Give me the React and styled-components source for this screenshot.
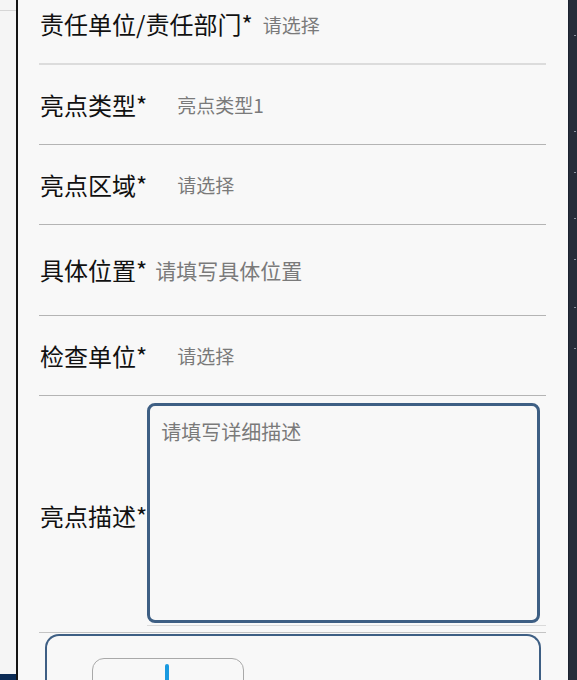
import React from 'react'
import styled, { createGlobalStyle } from 'styled-components'

const Global = createGlobalStyle`
  html, body { margin: 0; padding: 0; background: #f7f7f7; }
  body { font-family: "Noto Sans CJK SC", "Noto Sans", sans-serif; }
`;

const Screen = styled.div`
  display: flex;
  width: 577px;
  height: 680px;
  overflow: hidden;
`;

const SideStrip = styled.div`
  width: 16px;
  flex-shrink: 0;
  background: #f5f5f5;
  border-right: 2px solid #141414;
  display: flex;
  flex-direction: column;
  justify-content: space-between;
`;

const StripLine = styled.div`
  margin-top: 10px;
  height: 1px;
  background: #d6d6d6;
`;

const StripFoot = styled.div`
  height: 6px;
  background: #0b2b55;
`;

const Main = styled.div`
  flex: 1;
  background: #f8f8f8;
  padding: 0 22px 0 21px;
  overflow: hidden;
`;

const Form = styled.div`
  margin-top: -15px;
  display: flex;
  flex-direction: column;
`;

const Row = styled.div`
  display: flex;
  align-items: center;
  height: ${({ h }) => h || 80}px;
  border-bottom: ${({ soft }) => (soft ? '2px solid #dcdcdc' : '1px solid #b4b4b4')};
  box-sizing: border-box;
  padding-left: 1px;
`;

const Label = styled.span`
  font-size: 24px;
  line-height: 30px;
  color: #111;
  white-space: nowrap;
`;

const Value = styled.span`
  font-size: ${({ size }) => size || 19}px;
  color: #7a7a7a;
  margin-left: ${({ gap }) => gap || 0}px;
  white-space: nowrap;
`;

const DescRow = styled.div`
  display: flex;
  align-items: center;
  padding: 7px 0 4px 1px;
  height: 237px;
  box-sizing: border-box;
  border-bottom: 1px solid #c4c4c4;
`;

const DescField = styled.div`
  display: flex;
  flex-direction: column;
  align-self: flex-start;
`;

const TextBox = styled.div`
  width: 393px;
  height: 220px;
  box-sizing: border-box;
  border: 3px solid #3e5f84;
  border-radius: 8px;
  padding: 11px 11px;
  font-size: 20px;
  color: #7a7a7a;
`;

const Underline = styled.div`
  margin-top: 2px;
  width: 399px;
  height: 1px;
  background: #dadada;
`;

const Card = styled.div`
  margin: 1px 0 0 6px;
  width: 496px;
  height: 80px;
  box-sizing: border-box;
  border: 2px solid #3e5f84;
  border-bottom: none;
  border-radius: 14px 14px 0 0;
  padding: 22px 0 0 45px;
`;

const AddButton = styled.div`
  width: 152px;
  height: 60px;
  box-sizing: border-box;
  border: 1.5px solid #a9a9a9;
  border-radius: 12px;
  display: flex;
  justify-content: center;
  padding-top: 5px;
`;

const PlusBar = styled.div`
  width: 4px;
  height: 40px;
  border-radius: 2px;
  background: #1a9ae0;
  margin-left: -2px;
`;

const DarkEdge = styled.div`
  width: 8px;
  flex-shrink: 0;
  background: #262d3a;
  border-left: 1px solid #1c2230;
  display: flex;
  flex-direction: column;
  align-items: flex-end;
`;

const Tick = styled.div`
  width: 2px;
  height: 1px;
  background: #8c93a0;
  margin-top: ${({ top }) => top}px;
  margin-right: 1px;
`;

const rows = [
  { label: '责任单位/责任部门*', value: '请选择', gap: 10, soft: true },
  { label: '亮点类型*', value: '亮点类型1', gap: 30 },
  { label: '亮点区域*', value: '请选择', gap: 30 },
  { label: '具体位置*', value: '请填写具体位置', gap: 8, size: 21, h: 91 },
  { label: '检查单位*', value: '请选择', gap: 30 },
];

export default function App() {
  return (
    <>
      <Global />
      <Screen>
        <SideStrip>
          <StripLine />
          <StripFoot />
        </SideStrip>
        <Main>
          <Form>
            {rows.map((r) => (
              <Row key={r.label} h={r.h} soft={r.soft}>
                <Label>{r.label}</Label>
                <Value gap={r.gap} size={r.size}>{r.value}</Value>
              </Row>
            ))}
            <DescRow>
              <Label>亮点描述*</Label>
              <DescField>
                <TextBox>请填写详细描述</TextBox>
                <Underline />
              </DescField>
            </DescRow>
            <Card>
              <AddButton>
                <PlusBar />
              </AddButton>
            </Card>
          </Form>
        </Main>
        <DarkEdge>
          <Tick top={35} />
          <Tick top={95} />
          <Tick top={40} />
          <Tick top={45} />
          <Tick top={40} />
          <Tick top={47} />
          <Tick top={40} />
        </DarkEdge>
      </Screen>
    </>
  )
}
